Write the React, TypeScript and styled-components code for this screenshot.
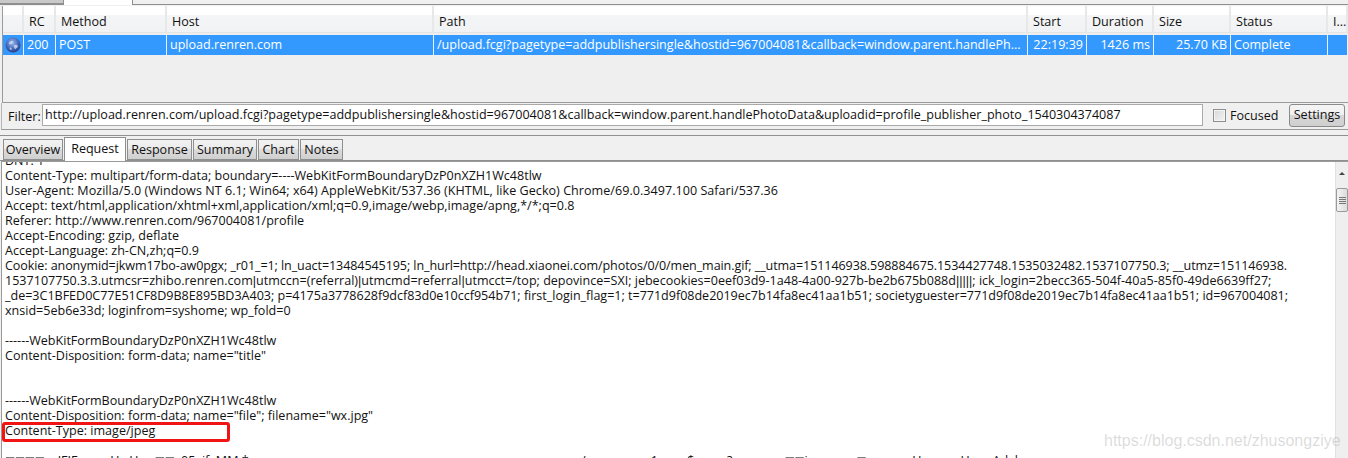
import React from "react";
import styled, { createGlobalStyle } from "styled-components";

const GlobalStyle = createGlobalStyle`
  html, body {
    margin: 0;
    padding: 0;
    width: 1348px;
    height: 458px;
    overflow: hidden;
    background: #f0f0f0;
  }
  * {
    box-sizing: border-box;
  }
`;

const COLUMNS = "21px 32px 111px 267px 594px 59px 67px 77px 97px 1fr";

const Window = styled.div`
  position: relative;
  width: 1348px;
  height: 458px;
  display: flex;
  flex-direction: column;
  overflow: hidden;
  font-family: "Open Sans", "Liberation Sans", sans-serif;
  font-size: 12.55px;
  color: #111;
  background: #f0f0f0;
`;

const TopStrip = styled.div`
  height: 5px;
  flex: none;
  display: flex;
  border-bottom: 1px solid #8e8f8f;
`;

const TopTab = styled.div<{ $active?: boolean }>`
  width: ${(p) => (p.$active ? "69px" : "64px")};
  height: ${(p) => (p.$active ? "5px" : "4px")};
  background: ${(p) => (p.$active ? "#fff" : "#c9c9c9")};
  border-right: 1px solid #8e8f8f;
  border-bottom: ${(p) => (p.$active ? "none" : "1px solid #8e8f8f")};
`;

const Session = styled.div`
  height: 97px;
  flex: none;
  margin: 1px 0 0 2px;
  background: #efefef;
  border-left: 1px solid #9a9a9a;
  border-bottom: 1px solid #9a9a9a;
`;

const HeaderRow = styled.div`
  display: grid;
  grid-template-columns: ${COLUMNS};
  height: 27px;
  background: linear-gradient(#fff 0 9px, #f4f5f6 9px, #f1f2f3);
  border-bottom: 1px solid #e4e4e4;
`;

const HeaderCell = styled.div`
  display: flex;
  align-items: center;
  padding: 4px 0 0 5px;
  border-right: 2px solid #e8e8e8;
  white-space: nowrap;
  overflow: hidden;
`;

const DataRow = styled.div`
  display: grid;
  grid-template-columns: ${COLUMNS};
  height: 20px;
  margin-top: 2px;
  background: #3399ff;
  color: #fff;
`;

const DataCell = styled.div<{ $right?: boolean }>`
  display: flex;
  align-items: center;
  justify-content: ${(p) => (p.$right ? "flex-end" : "flex-start")};
  padding: 0 3px 1px;
  border-right: 1px solid #e9f3fd;
  white-space: nowrap;
  overflow: hidden;
`;

const IconCell = styled(DataCell)`
  padding: 0 0 0 2px;
`;

const FilterBar = styled.div`
  height: 27px;
  flex: none;
  display: flex;
  align-items: flex-start;
  margin-left: 1px;
  padding: 1px 3px 0 6px;
  border-bottom: 1px solid #9a9a9a;
  border-left: 1px solid #b5b5b5;
`;

const FilterLabel = styled.span`
  width: 34px;
  flex: none;
  padding-top: 4px;
`;

const FilterInput = styled.div`
  width: 1161px;
  height: 22px;
  flex: none;
  padding: 0 2px 2px;
  display: flex;
  align-items: center;
  background: #fff;
  border: 1px solid #a9a9a9;
  white-space: nowrap;
  overflow: hidden;
`;

const CheckLabel = styled.label`
  display: flex;
  align-items: center;
  gap: 4px;
  margin-left: 10px;
  padding-top: 3px;
`;

const CheckBox = styled.span`
  width: 13px;
  height: 13px;
  background: linear-gradient(135deg, #d8d8d8, #f4f4f4);
  border: 1px solid #8e8f8f;
  box-shadow: inset 0 0 0 1px #f4f4f4;
`;

const SettingsButton = styled.button`
  width: 56px;
  height: 23px;
  margin-left: auto;
  padding: 0 0 2px;
  font: inherit;
  color: #111;
  background: linear-gradient(#f4f4f4, #f1f1f1 45%, #d6d6d6 50%, #cfcfcf);
  border: 1px solid #8a8a8a;
  border-radius: 3px;
`;

const TabArea = styled.div`
  flex: 1;
  min-height: 0;
  display: flex;
  flex-direction: column;
  margin-top: 5px;
  border-top: 1px solid #8e8f8f;
`;

const TabBar = styled.div`
  height: 25px;
  flex: none;
  display: flex;
  align-items: flex-end;
  gap: 1px;
  padding: 0 0 0 3px;
  border-bottom: 1px solid #8e8f8f;
`;

const Tab = styled.div<{ $active?: boolean; $width: number }>`
  width: ${(p) => p.$width}px;
  height: ${(p) => (p.$active ? "24px" : "21px")};
  margin-bottom: ${(p) => (p.$active ? "-1px" : "0")};
  padding-bottom: ${(p) => (p.$active ? "2px" : "1px")};
  display: flex;
  align-items: center;
  justify-content: center;
  white-space: nowrap;
  background: ${(p) =>
    p.$active ? "#fff" : "linear-gradient(#f2f2f2, #ebebeb 45%, #dcdcdc 50%, #cfcfcf)"};
  border: 1px solid #8e8f8f;
  border-bottom: ${(p) => (p.$active ? "none" : "1px solid #8e8f8f")};
  position: relative;
  z-index: ${(p) => (p.$active ? 1 : 0)};
`;

const Content = styled.div`
  flex: 1;
  min-height: 0;
  display: flex;
  margin-left: 1px;
  background: #fff;
  border-top: 1px solid #9a9a9a;
  border-left: 1px solid #9a9a9a;
  overflow: hidden;
`;

const RequestText = styled.div`
  flex: 1;
  min-width: 0;
  margin-top: -9px;
  padding-left: 3px;
  overflow: hidden;
`;

const TextLine = styled.div<{ $tracking?: number }>`
  height: 15px;
  line-height: 15px;
  white-space: pre;
  letter-spacing: ${(p) => p.$tracking ?? 0}px;
`;

// the reference font has much thinner pipes than Open Sans
const Pipes = styled.span`
  font-family: "Liberation Sans", sans-serif;
`;

const Boxes = styled.span`
  font-family: "DejaVu Sans", sans-serif;
  font-size: 10.5px;
  line-height: 1;
  vertical-align: 1px;
`;

const ScrollBar = styled.div`
  width: 13px;
  flex: none;
  display: flex;
  flex-direction: column;
  align-items: center;
  background: #efefef;
  border-left: 1px solid #e2e2e2;
`;

const ScrollArrow = styled.div`
  margin-top: 10px;
  width: 0;
  height: 0;
  border-left: 3px solid transparent;
  border-right: 3px solid transparent;
  border-bottom: 3px solid #444;
`;

const ScrollThumb = styled.div`
  width: 12px;
  height: 24px;
  margin-top: 13px;
  background: linear-gradient(90deg, #f4f4f4, #dcdcdc);
  border: 1px solid #9a9a9a;
  border-radius: 2px;
  display: flex;
  flex-direction: column;
  align-items: center;
  justify-content: center;
  gap: 1px;
`;

const Grip = styled.span`
  width: 7px;
  height: 1px;
  background: #777;
`;

const Highlight = styled.div`
  position: absolute;
  left: 2px;
  top: 422px;
  width: 228px;
  height: 20px;
  border: 3px solid #f01414;
  border-radius: 3px;
  pointer-events: none;
`;

const Watermark = styled.div`
  position: absolute;
  left: 1104px;
  top: 432px;
  font-family: "Liberation Sans", sans-serif;
  font-size: 16px;
  color: rgba(150, 150, 150, 0.34);
  pointer-events: none;
`;

const Globe = () => (
  <svg width="16" height="16" viewBox="0 0 17 17">
    <defs>
      <radialGradient id="globe" cx="45%" cy="35%" r="70%">
        <stop offset="0" stopColor="#9db8e8" />
        <stop offset="0.6" stopColor="#3f65b8" />
        <stop offset="1" stopColor="#24356f" />
      </radialGradient>
    </defs>
    <circle cx="8.5" cy="8.5" r="8" fill="url(#globe)" />
    <path d="M4 6l3-2 2 1-1 2-3 1zM9 9l3-1 2 2-3 3-1-1zM5 11l2 1 0 2-2-1z" fill="#cfdcf5" opacity="0.8" />
  </svg>
);

const headers = ["", "RC", "Method", "Host", "Path", "Start", "Duration", "Size", "Status", "I..."];
const tabs = [
  { label: "Overview", width: 60 },
  { label: "Request", width: 62 },
  { label: "Response", width: 65 },
  { label: "Summary", width: 64 },
  { label: "Chart", width: 41 },
  { label: "Notes", width: 43 },
];

// the body bytes of the jpeg, only the top of this line is visible
const binaryLine =
  "\u25a1\u25a1\u25a1\u25a1    JFIF          H   H     \u25a1\u25a1  05  if  MM *" +
  " ".repeat(102) +
  "/" +
  " ".repeat(20) +
  "1" +
  " ".repeat(9) +
  "$" +
  " ".repeat(10) +
  "?" +
  " ".repeat(16) +
  "\u25a1\u25a1" +
  "i" +
  " ".repeat(15) +
  "\u25a1" +
  " ".repeat(14) +
  "H" +
  " ".repeat(12) +
  "H" +
  " ".repeat(7) +
  "Ad" +
  " ".repeat(2) +
  "b";

const requestLines: { text: string; tracking?: number }[] = [
  { text: "DNT: 1" },
  { text: "Content-Type: multipart/form-data; boundary=----WebKitFormBoundaryDzP0nXZH1Wc48tlw" },
  {
    text: "User-Agent: Mozilla/5.0 (Windows NT 6.1; Win64; x64) AppleWebKit/537.36 (KHTML, like Gecko) Chrome/69.0.3497.100 Safari/537.36",
    tracking: 0.04,
  },
  { text: "Accept: text/html,application/xhtml+xml,application/xml;q=0.9,image/webp,image/apng,*/*;q=0.8" },
  { text: "Referer: http://www.renren.com/967004081/profile" },
  { text: "Accept-Encoding: gzip, deflate" },
  { text: "Accept-Language: zh-CN,zh;q=0.9" },
  {
    text: "Cookie: anonymid=jkwm17bo-aw0pgx; _r01_=1; ln_uact=13484545195; ln_hurl=http://head.xiaonei.com/photos/0/0/men_main.gif; __utma=151146938.598884675.1534427748.1535032482.1537107750.3; __utmz=151146938.",
    tracking: -0.087,
  },
  {
    text: "1537107750.3.3.utmcsr=zhibo.renren.com|utmccn=(referral)|utmcmd=referral|utmcct=/top; depovince=SXI; jebecookies=0eef03d9-1a48-4a00-927b-be2b675b088d|||||; ick_login=2becc365-504f-40a5-85f0-49de6639ff27;",
    tracking: 0.006,
  },
  {
    text: "_de=3C1BFED0C77E51CF8D9B8E895BD3A403; p=4175a3778628f9dcf83d0e10ccf954b71; first_login_flag=1; t=771d9f08de2019ec7b14fa8ec41aa1b51; societyguester=771d9f08de2019ec7b14fa8ec41aa1b51; id=967004081;",
    tracking: -0.015,
  },
  { text: "xnsid=5eb6e33d; loginfrom=syshome; wp_fold=0" },
  { text: "" },
  { text: "------WebKitFormBoundaryDzP0nXZH1Wc48tlw" },
  { text: 'Content-Disposition: form-data; name="title"' },
  { text: "" },
  { text: "" },
  { text: "------WebKitFormBoundaryDzP0nXZH1Wc48tlw" },
  { text: 'Content-Disposition: form-data; name="file"; filename="wx.jpg"' },
  { text: "Content-Type: image/jpeg" },
  { text: "" },
  { text: binaryLine },
];

const filterUrl =
  "http://upload.renren.com/upload.fcgi?pagetype=addpublishersingle&hostid=967004081&callback=window.parent.handlePhotoData&uploadid=profile_publisher_photo_1540304374087";

const renderLine = (text: string) =>
  text.split(/(\|+|\u25a1+)/).map((part, i) => {
    if (i % 2 === 0) return part;
    return part[0] === "|" ? <Pipes key={i}>{part}</Pipes> : <Boxes key={i}>{part}</Boxes>;
  });

export default function App() {
  return (
    <Window>
      <GlobalStyle />
      <TopStrip>
        <TopTab />
        <TopTab $active />
      </TopStrip>
      <Session>
        <HeaderRow>
          {headers.map((h, i) => (
            <HeaderCell key={i}>{h}</HeaderCell>
          ))}
        </HeaderRow>
        <DataRow>
          <IconCell>
            <Globe />
          </IconCell>
          <DataCell>200</DataCell>
          <DataCell>POST</DataCell>
          <DataCell>upload.renren.com</DataCell>
          <DataCell>/upload.fcgi?pagetype=addpublishersingle&amp;hostid=967004081&amp;callback=window.parent.handlePh...</DataCell>
          <DataCell $right>22:19:39</DataCell>
          <DataCell $right>1426 ms</DataCell>
          <DataCell $right>25.70 KB</DataCell>
          <DataCell>Complete</DataCell>
          <DataCell />
        </DataRow>
      </Session>
      <FilterBar>
        <FilterLabel>Filter:</FilterLabel>
        <FilterInput>{filterUrl}</FilterInput>
        <CheckLabel>
          <CheckBox />
          Focused
        </CheckLabel>
        <SettingsButton>Settings</SettingsButton>
      </FilterBar>
      <TabArea>
        <TabBar>
          {tabs.map((t) => (
            <Tab key={t.label} $active={t.label === "Request"} $width={t.width}>
              {t.label}
            </Tab>
          ))}
        </TabBar>
        <Content>
          <RequestText>
            {requestLines.map((line, i) => (
              <TextLine key={i} $tracking={line.tracking}>
                {renderLine(line.text)}
              </TextLine>
            ))}
          </RequestText>
          <ScrollBar>
            <ScrollArrow />
            <ScrollThumb>
              <Grip />
              <Grip />
              <Grip />
              <Grip />
            </ScrollThumb>
          </ScrollBar>
        </Content>
      </TabArea>
      <Highlight />
      <Watermark>https://blog.csdn.net/zhusongziye</Watermark>
    </Window>
  );
}
